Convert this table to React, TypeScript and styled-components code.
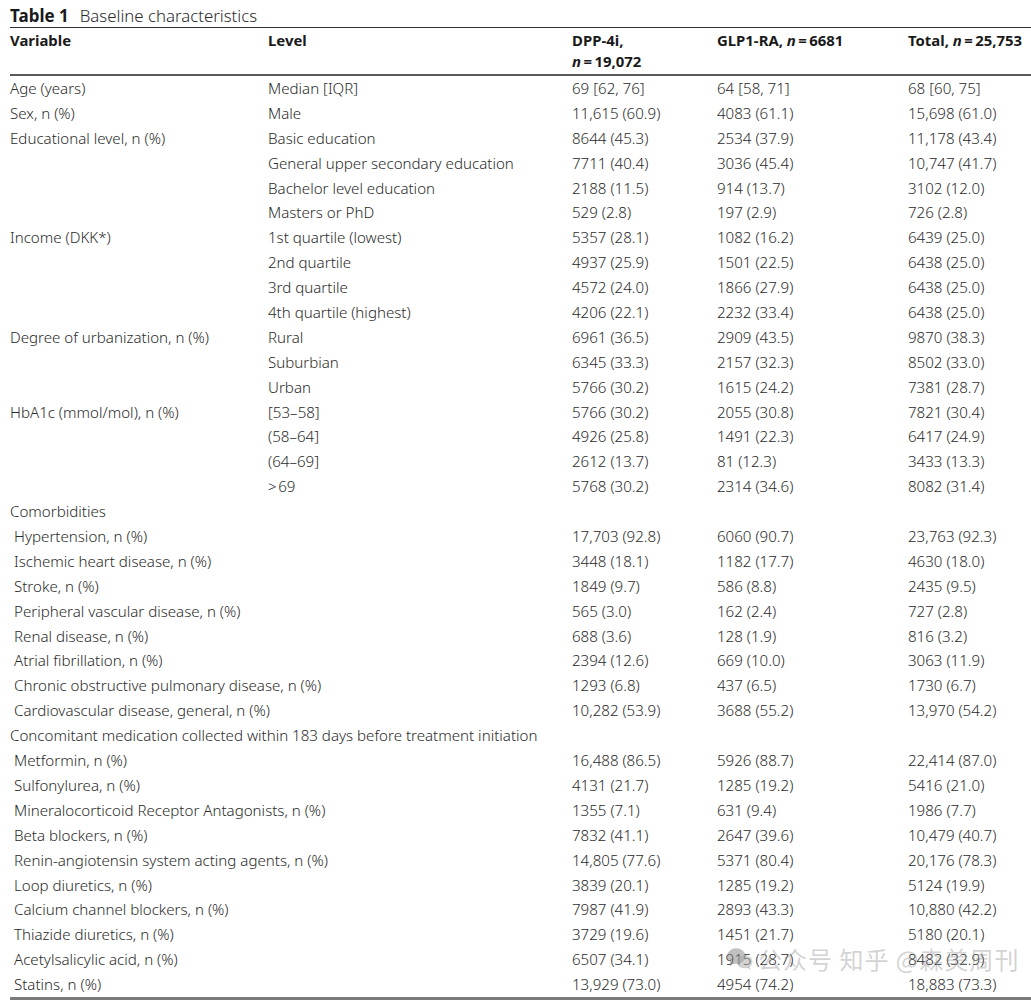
import React from 'react';
import styled, { createGlobalStyle } from 'styled-components';

const GlobalStyle = createGlobalStyle`
	html, body {
		margin: 0;
		padding: 0;
		background: #ffffff;
	}
	body {
		font-family: 'Noto Sans', 'Open Sans', sans-serif;
		color: #2b2b2b;
	}
`;

const Root = styled.div`
	position: relative;
	width: 1031px;
	height: 1002px;
	overflow: hidden;
	padding-left: 10px;
	box-sizing: border-box;
`;

const Caption = styled.div`
	padding-top: 5px;
	height: 22px;
	line-height: 22px;
	font-size: 16.8px;
	font-weight: 300;
	border-bottom: 1px solid #333;
	white-space: nowrap;
`;

const CaptionLabel = styled.span`
	font-size: 17px;
	font-weight: 700;
	color: #1a1a1a;
	margin-right: 11px;
`;

const Table = styled.div`
	display: grid;
	grid-template-columns: 258px 304px 145px 191px 1fr;
	font-size: 15.1px;
	font-weight: 300;
`;

const HeadCell = styled.div`
	font-weight: 700;
	color: #1a1a1a;
	font-size: 14.9px;
	line-height: 21px;
	padding: 2px 0 2px;
	border-bottom: 2px solid #5a5a5a;
	height: 42px;
	white-space: nowrap;
`;

const Cell = styled.div<{ $indent?: boolean; $last?: boolean }>`
	height: 24.9px;
	line-height: 24.9px;
	white-space: nowrap;
	padding-left: ${p => (p.$indent ? '4px' : '0')};
	border-bottom: ${p => (p.$last ? '3px solid #7a7a7a' : 'none')};
`;

const Italic = styled.i`
	font-style: italic;
	font-weight: 700;
`;

const Watermark = styled.div`
	position: absolute;
	left: 726px;
	top: 944px;
	font-family: 'Noto Sans CJK SC', sans-serif;
	font-size: 24px;
	line-height: 30px;
	letter-spacing: 1px;
	color: rgba(140, 140, 140, 0.4);
	white-space: nowrap;
	pointer-events: none;
	display: flex;
	align-items: center;
	gap: 4px;
`;

type Row = {
	variable?: string;
	level?: string;
	values?: [string, string, string];
	indent?: boolean;
};

const rows: Row[] = [
	{ variable: 'Age (years)', level: 'Median [IQR]', values: ['69 [62, 76]', '64 [58, 71]', '68 [60, 75]'] },
	{ variable: 'Sex, n (%)', level: 'Male', values: ['11,615 (60.9)', '4083 (61.1)', '15,698 (61.0)'] },
	{ variable: 'Educational level, n (%)', level: 'Basic education', values: ['8644 (45.3)', '2534 (37.9)', '11,178 (43.4)'] },
	{ level: 'General upper secondary education', values: ['7711 (40.4)', '3036 (45.4)', '10,747 (41.7)'] },
	{ level: 'Bachelor level education', values: ['2188 (11.5)', '914 (13.7)', '3102 (12.0)'] },
	{ level: 'Masters or PhD', values: ['529 (2.8)', '197 (2.9)', '726 (2.8)'] },
	{ variable: 'Income (DKK*)', level: '1st quartile (lowest)', values: ['5357 (28.1)', '1082 (16.2)', '6439 (25.0)'] },
	{ level: '2nd quartile', values: ['4937 (25.9)', '1501 (22.5)', '6438 (25.0)'] },
	{ level: '3rd quartile', values: ['4572 (24.0)', '1866 (27.9)', '6438 (25.0)'] },
	{ level: '4th quartile (highest)', values: ['4206 (22.1)', '2232 (33.4)', '6438 (25.0)'] },
	{ variable: 'Degree of urbanization, n (%)', level: 'Rural', values: ['6961 (36.5)', '2909 (43.5)', '9870 (38.3)'] },
	{ level: 'Suburbian', values: ['6345 (33.3)', '2157 (32.3)', '8502 (33.0)'] },
	{ level: 'Urban', values: ['5766 (30.2)', '1615 (24.2)', '7381 (28.7)'] },
	{ variable: 'HbA1c (mmol/mol), n (%)', level: '[53–58]', values: ['5766 (30.2)', '2055 (30.8)', '7821 (30.4)'] },
	{ level: '(58–64]', values: ['4926 (25.8)', '1491 (22.3)', '6417 (24.9)'] },
	{ level: '(64–69]', values: ['2612 (13.7)', '81 (12.3)', '3433 (13.3)'] },
	{ level: '>\u200A69', values: ['5768 (30.2)', '2314 (34.6)', '8082 (31.4)'] },
	{ variable: 'Comorbidities' },
	{ variable: 'Hypertension, n (%)', indent: true, values: ['17,703 (92.8)', '6060 (90.7)', '23,763 (92.3)'] },
	{ variable: 'Ischemic heart disease, n (%)', indent: true, values: ['3448 (18.1)', '1182 (17.7)', '4630 (18.0)'] },
	{ variable: 'Stroke, n (%)', indent: true, values: ['1849 (9.7)', '586 (8.8)', '2435 (9.5)'] },
	{ variable: 'Peripheral vascular disease, n (%)', indent: true, values: ['565 (3.0)', '162 (2.4)', '727 (2.8)'] },
	{ variable: 'Renal disease, n (%)', indent: true, values: ['688 (3.6)', '128 (1.9)', '816 (3.2)'] },
	{ variable: 'Atrial fibrillation, n (%)', indent: true, values: ['2394 (12.6)', '669 (10.0)', '3063 (11.9)'] },
	{ variable: 'Chronic obstructive pulmonary disease, n (%)', indent: true, values: ['1293 (6.8)', '437 (6.5)', '1730 (6.7)'] },
	{ variable: 'Cardiovascular disease, general, n (%)', indent: true, values: ['10,282 (53.9)', '3688 (55.2)', '13,970 (54.2)'] },
	{ variable: 'Concomitant medication collected within 183 days before treatment initiation' },
	{ variable: 'Metformin, n (%)', indent: true, values: ['16,488 (86.5)', '5926 (88.7)', '22,414 (87.0)'] },
	{ variable: 'Sulfonylurea, n (%)', indent: true, values: ['4131 (21.7)', '1285 (19.2)', '5416 (21.0)'] },
	{ variable: 'Mineralocorticoid Receptor Antagonists, n (%)', indent: true, values: ['1355 (7.1)', '631 (9.4)', '1986 (7.7)'] },
	{ variable: 'Beta blockers, n (%)', indent: true, values: ['7832 (41.1)', '2647 (39.6)', '10,479 (40.7)'] },
	{ variable: 'Renin-angiotensin system acting agents, n (%)', indent: true, values: ['14,805 (77.6)', '5371 (80.4)', '20,176 (78.3)'] },
	{ variable: 'Loop diuretics, n (%)', indent: true, values: ['3839 (20.1)', '1285 (19.2)', '5124 (19.9)'] },
	{ variable: 'Calcium channel blockers, n (%)', indent: true, values: ['7987 (41.9)', '2893 (43.3)', '10,880 (42.2)'] },
	{ variable: 'Thiazide diuretics, n (%)', indent: true, values: ['3729 (19.6)', '1451 (21.7)', '5180 (20.1)'] },
	{ variable: 'Acetylsalicylic acid, n (%)', indent: true, values: ['6507 (34.1)', '1915 (28.7)', '8482 (32.9)'] },
	{ variable: 'Statins, n (%)', indent: true, values: ['13,929 (73.0)', '4954 (74.2)', '18,883 (73.3)'] },
];

const WeChatMark = () => (
	<svg width="28" height="26" viewBox="0 0 30 28">
		<ellipse cx="11" cy="11" rx="10" ry="8.5" fill="rgba(130,130,130,0.5)" />
		<path d="M5 17 L4 22 L9 18 Z" fill="rgba(130,130,130,0.5)" />
		<ellipse cx="20" cy="17" rx="8.5" ry="7" fill="rgba(165,165,165,0.5)" />
		<path d="M25 22 L27 26 L22 23 Z" fill="rgba(165,165,165,0.5)" />
	</svg>
);

const App = () => {
	const last = rows.length - 1;
	return (
		<Root>
			<GlobalStyle />
			<Caption>
				<CaptionLabel>Table 1</CaptionLabel>Baseline characteristics
			</Caption>
			<Table>
				<HeadCell>Variable</HeadCell>
				<HeadCell>Level</HeadCell>
				<HeadCell>
					DPP-4i,<br />
					<Italic>n</Italic>{'\u2009=\u200919,072'}
				</HeadCell>
				<HeadCell>
					GLP1-RA, <Italic>n</Italic>{'\u2009=\u20096681'}
				</HeadCell>
				<HeadCell>
					Total, <Italic>n</Italic>{'\u2009=\u200925,753'}
				</HeadCell>
				{rows.map((r, i) => (
					<React.Fragment key={i}>
						<Cell $indent={r.indent} $last={i === last}>{r.variable ?? ''}</Cell>
						<Cell $last={i === last}>{r.level ?? ''}</Cell>
						<Cell $last={i === last}>{r.values?.[0] ?? ''}</Cell>
						<Cell $last={i === last}>{r.values?.[1] ?? ''}</Cell>
						<Cell $last={i === last}>{r.values?.[2] ?? ''}</Cell>
					</React.Fragment>
				))}
			</Table>
			<Watermark>
				<WeChatMark />
				<span>公众号 知乎 @森美周刊</span>
			</Watermark>
		</Root>
	);
};

export default App;
